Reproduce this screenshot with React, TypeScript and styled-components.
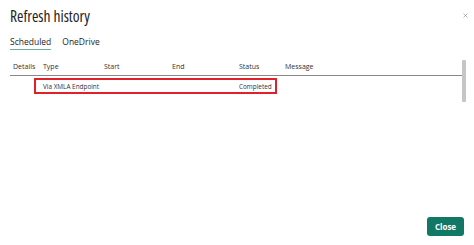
import React from "react";
import styled, { createGlobalStyle } from "styled-components";
import { X } from "lucide-react";

const GlobalStyle = createGlobalStyle`
  html, body {
    margin: 0;
    padding: 0;
    background: #ffffff;
  }
  body {
    font-family: "Open Sans", "Noto Sans", sans-serif;
    color: #323130;
  }
`;

const Dialog = styled.div`
  width: 474px;
  height: 245px;
  box-sizing: border-box;
  padding: 0 8px 9px 10px;
  display: flex;
  flex-direction: column;
`;

const TitleBar = styled.div`
  display: flex;
  justify-content: space-between;
  align-items: flex-start;
  padding-top: 5px;
`;

const Title = styled.h1`
  margin: 0;
  font-family: "Open Sans", "Noto Sans", sans-serif;
  font-size: 15.5px;
  font-stretch: 74%;
  line-height: 22px;
  font-weight: 400;
  color: #252423;
`;

const CloseIcon = styled.button`
  border: 0;
  background: none;
  padding: 0;
  margin: 7px -3px 0 0;
  display: flex;
  color: #605e5c;
`;

const Tabs = styled.div`
  display: flex;
  gap: 11px;
  margin-top: 9px;
`;

const Tab = styled.div<{ $active?: boolean }>`
  font-size: 8.5px;
  line-height: 12px;
  color: #252423;
  padding-bottom: 1px;
  border-bottom: 1.5px solid ${(p) => (p.$active ? "#6fae9f" : "transparent")};
`;

const Body = styled.div`
  display: flex;
  margin-top: 7px;
`;

const Table = styled.div`
  flex: 1;
`;

const Row = styled.div<{ $header?: boolean }>`
  display: grid;
  grid-template-columns: 30px 61px 68px 67px 46px 1fr;
  align-items: center;
  height: ${(p) => (p.$header ? "18px" : "20px")};
  border-bottom: ${(p) => (p.$header ? "1px solid #8a8886" : "none")};
  font-size: ${(p) => (p.$header ? "7px" : "6.4px")};
  color: #323130;
`;

const Cell = styled.div`
  grid-row: 1;
  padding-left: 3px;
  white-space: nowrap;
`;

const Highlight = styled.div`
  grid-row: 1;
  grid-column: 2 / 6;
  margin: 0 5px 0 -6px;
  height: 16px;
  box-sizing: border-box;
  border: 2px solid #e0202b;
`;

const Scrollbar = styled.div`
  width: 4px;
  height: 42px;
  margin-top: 3px;
  background: #c8c6c4;
  border-radius: 1px;
`;

const Footer = styled.div`
  margin-top: auto;
  display: flex;
  justify-content: flex-end;
  padding-right: 2px;
`;

const PrimaryButton = styled.button`
  width: 37px;
  height: 19px;
  border: 0;
  border-radius: 3px;
  background: #117865;
  color: #ffffff;
  font-family: "Open Sans", "Noto Sans", sans-serif;
  font-size: 8px;
  font-weight: 700;
  padding: 0;
`;

const columns = ["Details", "Type", "Start", "End", "Status", "Message"];

const App = () => {
  return (
    <>
      <GlobalStyle />
      <Dialog>
        <TitleBar>
          <Title>Refresh history</Title>
          <CloseIcon aria-label="Close">
            <X size={7} strokeWidth={1.5} />
          </CloseIcon>
        </TitleBar>
        <Tabs>
          <Tab $active>Scheduled</Tab>
          <Tab>OneDrive</Tab>
        </Tabs>
        <Body>
          <Table>
            <Row $header>
              {columns.map((c) => (
                <Cell key={c}>{c}</Cell>
              ))}
            </Row>
            <Row>
              <Highlight />
              <Cell style={{ gridColumn: 2 }}>Via XMLA Endpoint</Cell>
              <Cell style={{ gridColumn: 5 }}>Completed</Cell>
            </Row>
          </Table>
          <Scrollbar />
        </Body>
        <Footer>
          <PrimaryButton>Close</PrimaryButton>
        </Footer>
      </Dialog>
    </>
  );
};

export default App;
